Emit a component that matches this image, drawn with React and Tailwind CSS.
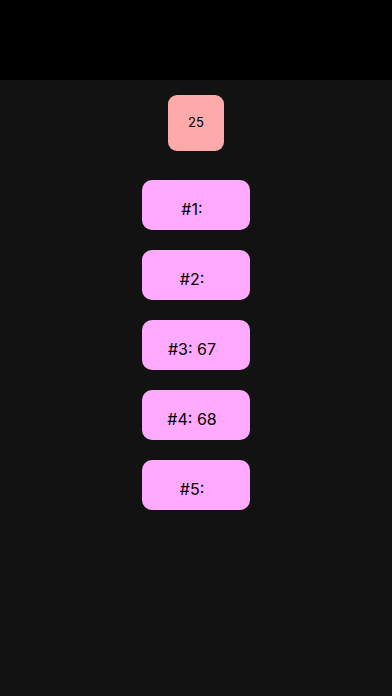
import React from "react";

const slots = [
  { id: 1, value: "" },
  { id: 2, value: "" },
  { id: 3, value: "67" },
  { id: 4, value: "68" },
  { id: 5, value: "" },
];

export default function App() {
  return (
    <div className="w-[392px] h-[696px] flex flex-col bg-[#121212] font-['Inter',sans-serif] text-black">
      <div className="h-[80px] bg-black shrink-0" />
      <div className="flex flex-col items-center pt-[15px]">
        <div className="w-[56px] h-[56px] rounded-[9px] bg-[#ffaaaa] flex items-center justify-center text-[13px]">
          25
        </div>
        <div className="flex flex-col gap-[20px] mt-[29px]">
          {slots.map((s) => (
            <div
              key={s.id}
              className="w-[108px] h-[50px] rounded-[10px] bg-[#ffaaff] flex items-center justify-center pt-[7px] pr-[8px] text-[16px]"
            >
              #{s.id}: {s.value}
            </div>
          ))}
        </div>
      </div>
    </div>
  );
}
